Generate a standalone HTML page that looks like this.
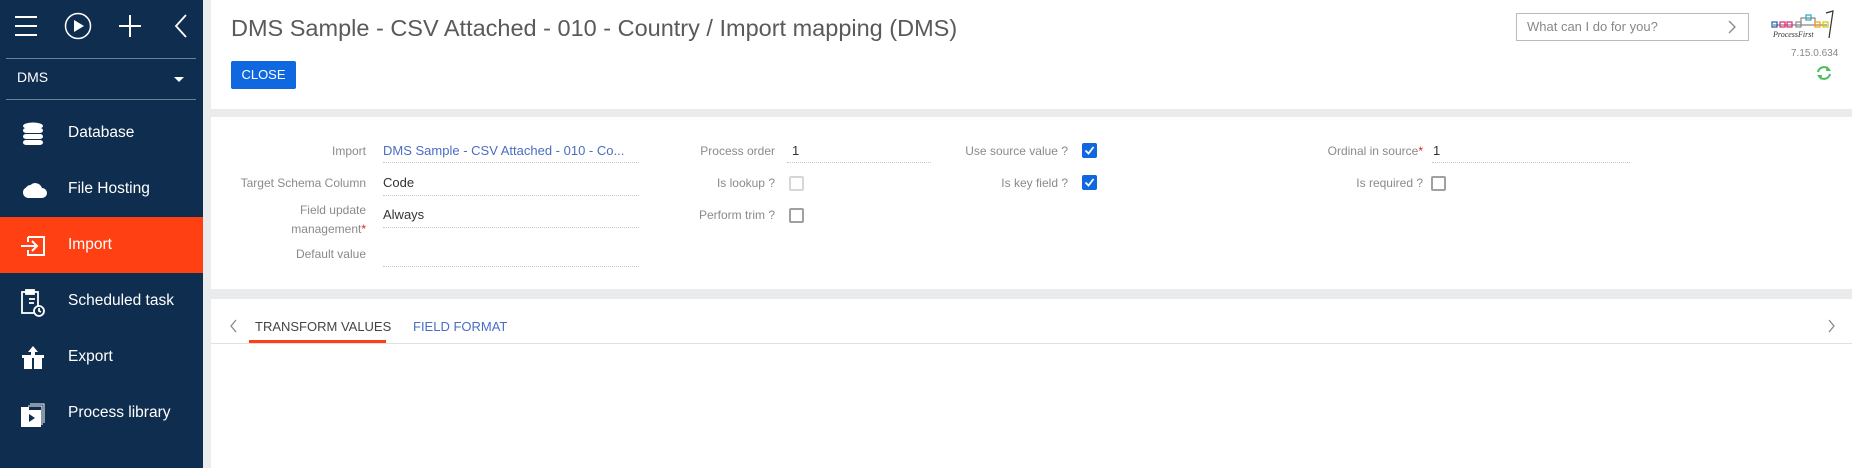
<!DOCTYPE html>
<html><head><meta charset="utf-8"><style>
*{margin:0;padding:0;box-sizing:border-box}
body{width:1852px;height:468px;background:#e9ebec;font-family:"Liberation Sans",sans-serif;position:relative;overflow:hidden}
.sb{position:absolute;left:0;top:0;width:203px;height:468px;background:#0f2d4e;color:#fff}
.abs{position:absolute}
.item{position:absolute;left:0;width:203px;height:56px;font-size:15.5px;line-height:56px;padding-left:68px}
.item svg{position:absolute;left:20px;top:16px}
.panel{position:absolute;left:211px;right:0;background:#fff}
.lbl{position:absolute;font-size:12px;color:#8a8a8a;text-align:right}
.val{position:absolute;font-size:13px;color:#333}
.line{position:absolute;height:0;border-top:1px dotted #c8c8c8}
.cb{position:absolute;width:15px;height:15px;border:2px solid #a0a0a0;border-radius:2px}
.cbl{border-color:#d6d6d6}
.cbc{background:#1068e0;border:none;border-radius:2px}
.ast{color:#e02020}
</style></head><body>
<div class="sb">
 <svg class="abs" style="left:0;top:0" width="203" height="60">
  <g stroke="#fff" stroke-width="2" fill="none">
   <line x1="15" y1="17" x2="37" y2="17"/><line x1="15" y1="26" x2="37" y2="26"/><line x1="15" y1="35" x2="37" y2="35"/>
   <circle cx="78" cy="26" r="12.5" stroke-width="1.5"/>
   <line x1="130" y1="15" x2="130" y2="37"/><line x1="119" y1="26" x2="141" y2="26"/>
   <polyline points="186,15 176,26 186,37" stroke-width="1.8"/>
  </g>
  <polygon points="74,20 74,32 84,26" fill="#fff"/>
 </svg>
 <div class="abs" style="left:6px;top:58px;width:190px;border-top:1px solid #6b7f96"></div>
 <div class="abs" style="left:17px;top:69px;font-size:14px">DMS</div>
 <div class="abs" style="left:174px;top:77px;border-left:5px solid transparent;border-right:5px solid transparent;border-top:5px solid #fff"></div>
 <div class="abs" style="left:6px;top:99px;width:190px;border-top:1px solid #6b7f96"></div>
 <div class="item" style="top:105px"><svg width="26" height="26"><g fill="#fff"><ellipse cx="13" cy="5" rx="10" ry="3.5"/><rect x="3" y="7" width="20" height="5" rx="3"/><rect x="3" y="13" width="20" height="5" rx="3"/><rect x="3" y="19" width="20" height="5" rx="3"/></g></svg>Database</div>
 <div class="item" style="top:161px"><svg width="28" height="26"><path d="M8 21 h14 a5 5 0 0 0 0-10 a7 7 0 0 0-13-1 a5 5 0 0 0-1 11z" fill="#fff"/><path d="M6 15 a5 5 0 0 1 5-6" stroke="#fff" stroke-width="2" fill="none"/></svg>File Hosting</div>
 <div class="item" style="top:217px;background:#ff4013"><svg width="26" height="26"><g stroke="#fff" stroke-width="2" fill="none"><polyline points="8,4 24,4 24,22 8,22 8,17"/><polyline points="8,9 8,4"/><line x1="1" y1="13" x2="17" y2="13"/><polyline points="12,8 17,13 12,18"/></g></svg>Import</div>
 <div class="item" style="top:273px"><svg width="26" height="28"><g stroke="#fff" stroke-width="1.8" fill="none"><rect x="2" y="3" width="16" height="21"/><rect x="6" y="1" width="8" height="4" fill="#fff"/><line x1="9" y1="10" x2="15" y2="10"/><line x1="9" y1="14" x2="14" y2="14"/><circle cx="19" cy="22" r="5" fill="#0f2d4e"/><polyline points="19,19 19,22 21,23"/></g></svg>Scheduled task</div>
 <div class="item" style="top:329px"><svg width="26" height="26"><g fill="#fff"><rect x="4" y="13" width="8" height="11"/><rect x="14" y="13" width="8" height="11"/><rect x="2" y="10" width="22" height="3"/><polygon points="13,1 8,7 11,7 11,10 15,10 15,7 18,7"/></g></svg>Export</div>
 <div class="item" style="top:385px"><svg width="28" height="28"><g fill="none" stroke="#fff" stroke-width="1"><polyline points="10,3 24,3 24,22"/><polyline points="8,5 22,5 22,24"/></g><rect x="1" y="9" width="20" height="17" fill="#fff"/><rect x="1" y="6" width="8" height="4" fill="#fff"/><polygon points="9,13 9,21 15,17" fill="#0f2d4e"/></svg>Process library</div>
</div>
<div class="abs" style="left:203px;top:0;width:8px;height:468px;background:#e9ebec"></div>

<div class="panel" style="top:0;height:109px">
 <div class="abs" style="left:20px;top:15px;font-size:23.5px;color:#5a5a5a">DMS Sample - CSV Attached - 010 - Country / Import mapping (DMS)</div>
 <div class="abs" style="left:20px;top:61px;width:65px;height:28px;background:#1068e0;border-radius:2px;color:#fff;font-size:13px;line-height:28px;text-align:center">CLOSE</div>
 <div class="abs" style="left:1305px;top:13px;width:233px;height:28px;border:1px solid #bbb;font-size:13px;color:#888;line-height:26px;padding-left:10px">What can I do for you?</div>
 <svg class="abs" style="left:1515px;top:19px" width="12" height="16"><polyline points="3,2 9,8 3,14" stroke="#888" stroke-width="1.3" fill="none"/></svg>
 <svg class="abs" style="left:1560px;top:10px" width="64" height="32"><g stroke-width="1.2" fill="none"><line x1="2" y1="15" x2="56" y2="15" stroke="#888"/><polyline points="30,15 30,8 44,8 44,15" stroke="#888"/><rect x="1" y="12" width="5" height="5" stroke="#1a5fb0"/><rect x="9" y="12" width="5" height="5" stroke="#e0206f"/><rect x="16" y="12" width="5" height="5" stroke="#e0206f"/><rect x="25" y="12" width="5" height="5" stroke="#888"/><rect x="35" y="5" width="5" height="5" stroke="#2ab"/><rect x="44" y="12" width="5" height="5" stroke="#f90"/><rect x="52" y="12" width="5" height="5" stroke="#cc0"/><path d="M55 3 L62 1 L58 28" stroke="#333"/></g><text x="2" y="27" font-size="8" font-style="italic" fill="#333" font-family="Liberation Serif">ProcessFirst</text></svg>
 <div class="abs" style="left:1580px;top:48px;width:42px;font-size:10px;color:#888;text-align:right">7.15.0.634</div>
 <svg class="abs" style="left:1604px;top:64px" width="18" height="18"><g stroke="#4cbb5c" stroke-width="2" fill="none"><path d="M3 8 a6 6 0 0 1 11-2"/><path d="M15 10 a6 6 0 0 1-11 2"/></g><polygon points="12,2 16,7 11,7" fill="#4cbb5c"/><polygon points="6,16 2,11 7,11" fill="#4cbb5c"/></svg>
</div>

<div class="panel" style="top:117px;height:172px">
 <div class="lbl" style="right:1486px;top:27px">Import</div>
 <div class="val" style="left:172px;top:26px;color:#4a6dc4">DMS Sample - CSV Attached - 010 - Co...</div>
 <div class="line" style="left:172px;width:256px;top:45px"></div>
 <div class="lbl" style="right:1486px;top:59px">Target Schema Column</div>
 <div class="val" style="left:172px;top:58px">Code</div>
 <div class="line" style="left:172px;width:256px;top:78px"></div>
 <div class="lbl" style="right:1486px;top:84px;line-height:19px">Field update<br>management<span class="ast">*</span></div>
 <div class="val" style="left:172px;top:90px">Always</div>
 <div class="line" style="left:172px;width:256px;top:110px"></div>
 <div class="lbl" style="right:1486px;top:130px">Default value</div>
 <div class="line" style="left:172px;width:256px;top:149px"></div>

 <div class="lbl" style="right:1077px;top:27px">Process order</div>
 <div class="val" style="left:581px;top:26px">1</div>
 <div class="line" style="left:576px;width:144px;top:45px"></div>
 <div class="lbl" style="right:1077px;top:59px">Is lookup ?</div>
 <div class="cb cbl" style="left:578px;top:59px"></div>
 <div class="lbl" style="right:1077px;top:91px">Perform trim ?</div>
 <div class="cb" style="left:578px;top:91px"></div>

 <div class="lbl" style="right:784px;top:27px">Use source value ?</div>
 <div class="cb cbc" style="left:871px;top:26px"><svg width="15" height="15"><polyline points="3.5,7.5 6.5,10.5 11.5,4" stroke="#fff" stroke-width="1.8" fill="none"/></svg></div>
 <div class="lbl" style="right:784px;top:59px">Is key field ?</div>
 <div class="cb cbc" style="left:871px;top:58px"><svg width="15" height="15"><polyline points="3.5,7.5 6.5,10.5 11.5,4" stroke="#fff" stroke-width="1.8" fill="none"/></svg></div>

 <div class="lbl" style="right:429px;top:27px">Ordinal in source<span class="ast">*</span></div>
 <div class="val" style="left:1222px;top:26px">1</div>
 <div class="line" style="left:1221px;width:198px;top:45px"></div>
 <div class="lbl" style="right:429px;top:59px">Is required ?</div>
 <div class="cb" style="left:1220px;top:59px"></div>
</div>

<div class="panel" style="top:299px;height:169px">
 <svg class="abs" style="left:18px;top:19px" width="10" height="16"><polyline points="7,2 2,8 7,14" stroke="#888" stroke-width="1.3" fill="none"/></svg>
 <div class="abs" style="left:44px;top:20px;font-size:13px;color:#444">TRANSFORM VALUES</div>
 <div class="abs" style="left:38px;top:41px;width:137px;height:3px;background:#ff4013"></div>
 <div class="abs" style="left:202px;top:20px;font-size:13px;color:#4a6dc4">FIELD FORMAT</div>
 <svg class="abs" style="left:1615px;top:19px" width="10" height="16"><polyline points="3,2 8,8 3,14" stroke="#888" stroke-width="1.3" fill="none"/></svg>
 <div class="abs" style="left:0;right:0;top:44px;border-top:1px solid #e0e0e0"></div>
</div>
</body></html>
